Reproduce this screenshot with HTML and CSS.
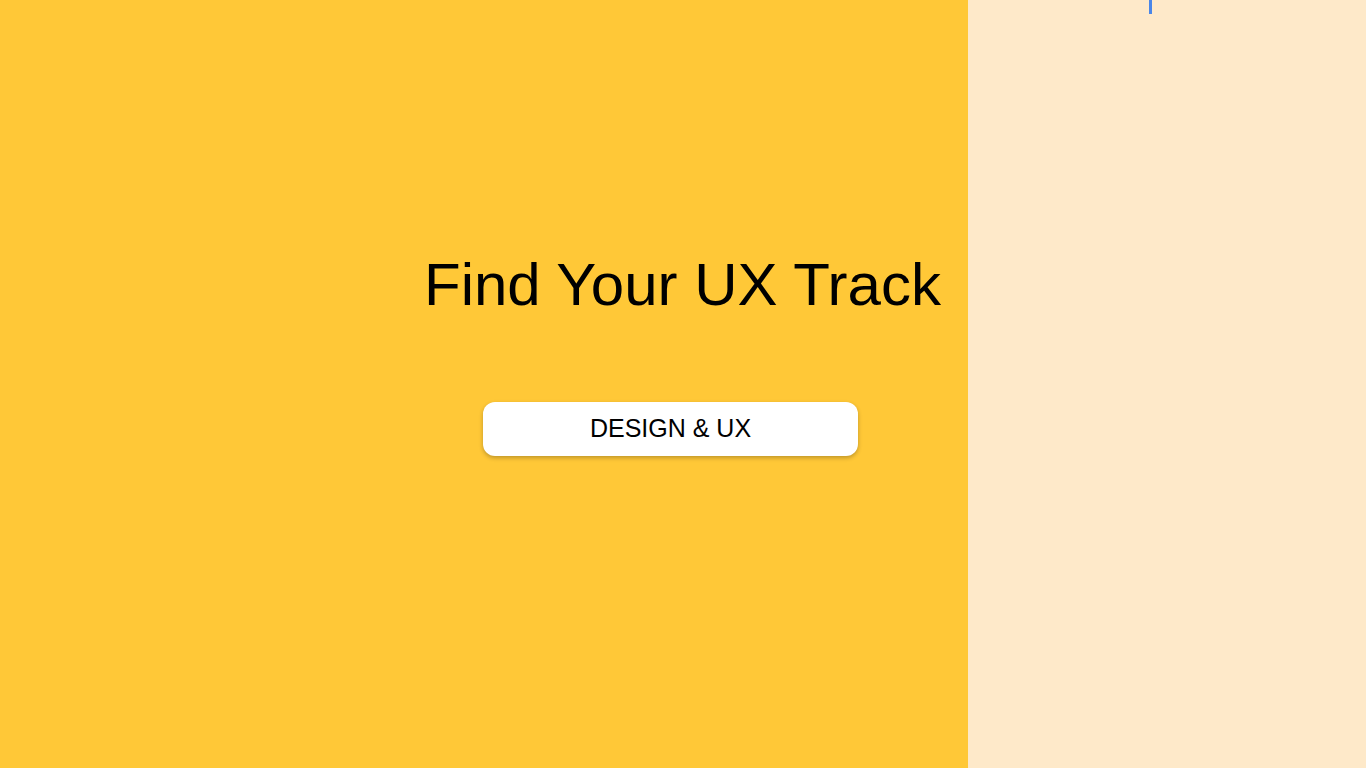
FILE: index.html
```html
<!DOCTYPE html>
<html lang="en">
<head>
<meta charset="utf-8">
<title>Find Your UX Track</title>
<link rel="stylesheet" href="styles.css">
</head>
<body>
<div class="page">
  <main class="hero">
    <h1 class="title">Find Your UX Track</h1>
    <button class="track-btn" type="button">DESIGN &amp; UX</button>
  </main>
  <aside class="side">
    <div class="caret"></div>
  </aside>
</div>
</body>
</html>
```
FILE: styles.css
```css
html, body {
  margin: 0;
  padding: 0;
  height: 100%;
}
body {
  font-family: "Liberation Sans", Arial, sans-serif;
  color: #000;
}
.page {
  display: flex;
  height: 768px;
  overflow: hidden;
}
.hero {
  width: 968px;
  flex: none;
  background: #ffc837;
  padding-top: 250px;
  box-sizing: border-box;
}
.title {
  margin: 0 0 0 424px;
  font-size: 60px;
  font-weight: 400;
  line-height: 69px;
  white-space: nowrap;
}
.track-btn {
  display: block;
  margin: 83px 0 0 483px;
  width: 375px;
  height: 54px;
  border: none;
  border-radius: 12px;
  background: #fff;
  font-family: "Liberation Sans", Arial, sans-serif;
  font-size: 25px;
  line-height: 52px;
  color: #000;
  box-shadow: 0 2px 4px rgba(0, 0, 0, 0.25);
  padding: 0 0 2px 0;
  cursor: pointer;
}
.side {
  flex: 1;
  background: #fee9c9;
}
.caret {
  width: 3px;
  height: 14px;
  margin-left: 181px;
  background: #4a86e8;
}
```
